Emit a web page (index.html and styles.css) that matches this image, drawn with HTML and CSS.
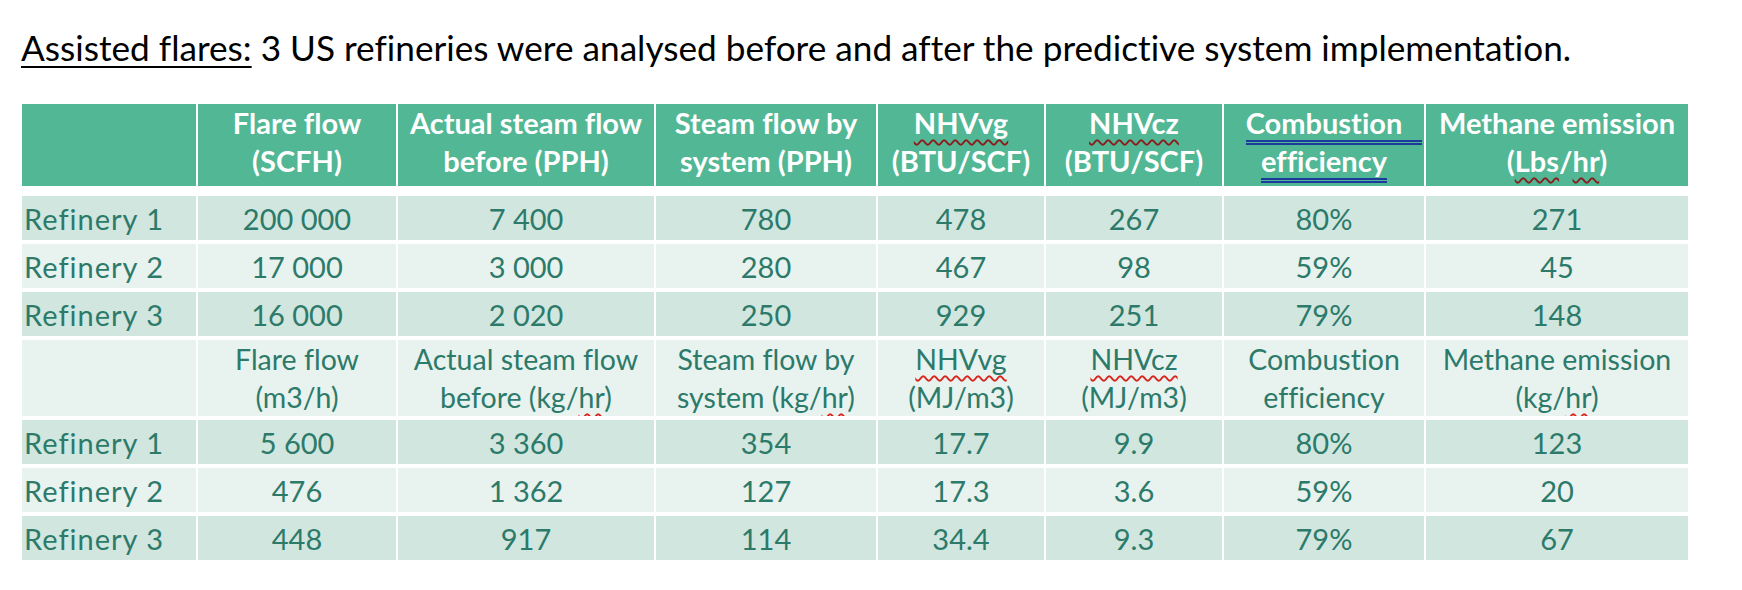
FILE: index.html
```html
<!DOCTYPE html>
<html>
<head>
<meta charset="utf-8">
<link rel="stylesheet" href="styles.css">
</head>
<body>
<div class="page">
  <p class="title"><span class="ul">Assisted flares:</span> 3 US refineries were analysed before and after the predictive system implementation.</p>
  <div class="tbl">
    <div class="row head">
      <div class="c first"></div>
      <div class="c">Flare flow<br>(SCFH)</div>
      <div class="c">Actual steam flow<br>before (PPH)</div>
      <div class="c">Steam flow by<br>system (PPH)</div>
      <div class="c"><span class="sp">NHVvg</span><br>(BTU/SCF)</div>
      <div class="c"><span class="sp">NHVcz</span><br>(BTU/SCF)</div>
      <div class="c"><span class="gr ext">Combustion</span><br><span class="gr">efficiency</span></div>
      <div class="c">Methane emission<br>(<span class="sp">Lbs</span>/<span class="sp">hr</span>)</div>
    </div>
    <div class="row data dark">
      <div class="c first">Refinery 1</div><div class="c">200 000</div><div class="c">7 400</div><div class="c">780</div><div class="c">478</div><div class="c">267</div><div class="c">80%</div><div class="c">271</div>
    </div>
    <div class="row data light">
      <div class="c first">Refinery 2</div><div class="c">17 000</div><div class="c">3 000</div><div class="c">280</div><div class="c">467</div><div class="c">98</div><div class="c">59%</div><div class="c">45</div>
    </div>
    <div class="row data dark">
      <div class="c first">Refinery 3</div><div class="c">16 000</div><div class="c">2 020</div><div class="c">250</div><div class="c">929</div><div class="c">251</div><div class="c">79%</div><div class="c">148</div>
    </div>
    <div class="row sub light">
      <div class="c first"></div>
      <div class="c">Flare flow<br>(m3/h)</div>
      <div class="c">Actual steam flow<br>before (kg/<span class="sp">hr</span>)</div>
      <div class="c">Steam flow by<br>system (kg/<span class="sp">hr</span>)</div>
      <div class="c"><span class="sp">NHVvg</span><br>(MJ/m3)</div>
      <div class="c"><span class="sp">NHVcz</span><br>(MJ/m3)</div>
      <div class="c">Combustion<br>efficiency</div>
      <div class="c">Methane emission<br>(kg/<span class="sp">hr</span>)</div>
    </div>
    <div class="row data dark">
      <div class="c first">Refinery 1</div><div class="c">5 600</div><div class="c">3 360</div><div class="c">354</div><div class="c">17.7</div><div class="c">9.9</div><div class="c">80%</div><div class="c">123</div>
    </div>
    <div class="row data light">
      <div class="c first">Refinery 2</div><div class="c">476</div><div class="c">1 362</div><div class="c">127</div><div class="c">17.3</div><div class="c">3.6</div><div class="c">59%</div><div class="c">20</div>
    </div>
    <div class="row data dark">
      <div class="c first">Refinery 3</div><div class="c">448</div><div class="c">917</div><div class="c">114</div><div class="c">34.4</div><div class="c">9.3</div><div class="c">79%</div><div class="c">67</div>
    </div>
  </div>
</div>
</body>
</html>
```
FILE: styles.css
```css
html, body {
  margin: 0;
  padding: 0;
  background: #ffffff;
}
.page {
  padding: 27px 0 0 21px;
  font-family: Lato, "Open Sans", sans-serif;
  font-variant-ligatures: none;
}
.title {
  margin: 0 0 37px 0;
  font-size: 35.2px;
  line-height: 40px;
  color: #000000;
  white-space: nowrap;
}
.title .ul {
  text-decoration: underline;
  text-decoration-thickness: 2px;
  text-underline-offset: 5px;
}
.tbl {
  display: grid;
  grid-template-columns: 174px 198px 256px 220px 166px 176px 200px 262px;
  column-gap: 2px;
  row-gap: 4px;
  margin-left: 1px;
  width: 1666px;
}
.row {
  display: contents;
}
.c {
  text-align: center;
  overflow: hidden;
  white-space: nowrap;
}
.c.first {
  text-align: left;
  padding-left: 2px;
}
.data .c.first {
  letter-spacing: 1px;
}
.head .c {
  background: #52b795;
  color: #ffffff;
  font-weight: 700;
  font-size: 29px;
  line-height: 38px;
  height: 82px;
  box-sizing: border-box;
  padding-top: 0;
  margin-bottom: 6px;
}
.data .c {
  color: #2c7a6a;
  font-size: 29px;
  line-height: 42px;
  height: 44px;
  box-sizing: border-box;
  padding-top: 2px;
}
.sub .c {
  color: #2c7a6a;
  font-size: 28.5px;
  line-height: 38px;
  height: 76px;
  box-sizing: border-box;
}
.dark .c {
  background: #d0e6de;
}
.light .c {
  background: #e8f2ef;
}
.sp {
  text-decoration: underline wavy #d9261c;
  text-decoration-thickness: 1.5px;
  text-underline-offset: 5px;
  text-decoration-skip-ink: none;
}
.head .sp {
  text-decoration-color: #8a1d1d;
}
.gr {
  border-bottom: 5px double #1b3a9b;
}
.gr.ext {
  padding-right: 20px;
  margin-right: -20px;
}
```
